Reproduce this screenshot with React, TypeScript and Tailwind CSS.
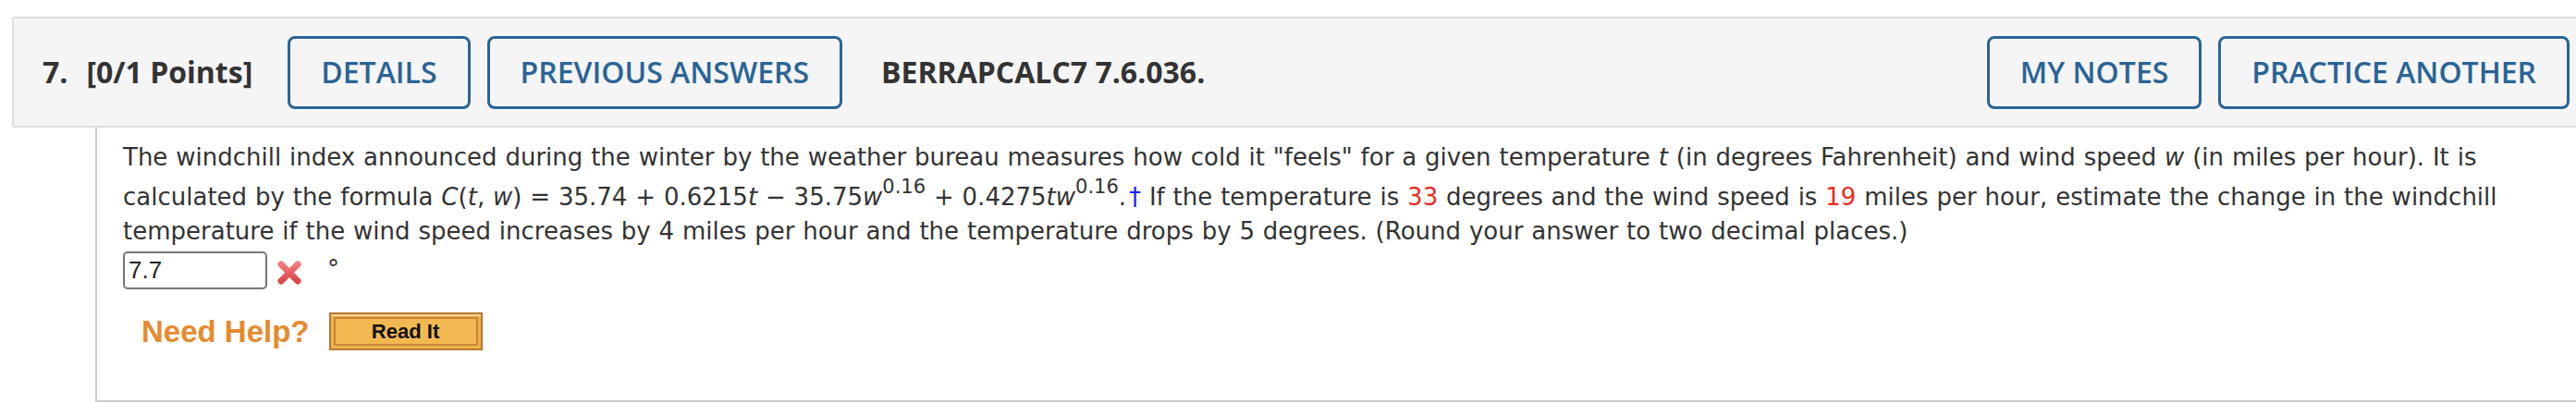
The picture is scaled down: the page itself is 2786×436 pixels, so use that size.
import React from "react";

const OPEN = { fontFamily: '"Open Sans", "Liberation Sans", sans-serif' };
const VERD = { fontFamily: '"DejaVu Sans", Verdana, sans-serif' };
const ARIAL = { fontFamily: '"Liberation Sans", Arial, sans-serif' };

function HeaderButton({ label }: { label: string }) {
  return (
    <button
      className="h-[79px] px-[33px] border-[3px] border-[#2a6496] rounded-[8px] bg-transparent text-[#2a6496] text-[32px] font-semibold leading-none whitespace-nowrap"
      style={OPEN}
    >
      {label}
    </button>
  );
}

function RedX() {
  return (
    <svg width="28" height="26" viewBox="0 0 28 26" className="ml-[10px] mt-[10px] shrink-0">
      <defs>
        <linearGradient id="xg" x1="0" y1="0" x2="0" y2="1">
          <stop offset="0" stopColor="#f07a7c" />
          <stop offset="1" stopColor="#d9474b" />
        </linearGradient>
      </defs>
      <path d="M5 4 L23 22 M23 4 L5 22" stroke="url(#xg)" strokeWidth="7" strokeLinecap="round" fill="none" />
    </svg>
  );
}

export default function App() {
  return (
    <div className="w-[2786px] h-[436px] overflow-hidden bg-white">
      <div className="pt-[18px] pl-[13px] w-[2812px]">
        {/* Header */}
        <div className="h-[120px] border-2 border-[#dedede] rounded-[3px] bg-[#f5f5f5] flex items-center pl-[31px] pr-[31px]">
          <div className="flex items-center text-[32px] font-bold text-[#333333] whitespace-nowrap" style={OPEN}>
            <span>7.</span>
            <span className="ml-[20px]">[0/1 Points]</span>
          </div>
          <div className="flex items-center gap-[18px] ml-[38px]">
            <HeaderButton label="DETAILS" />
            <HeaderButton label="PREVIOUS ANSWERS" />
          </div>
          <div className="ml-[42px] text-[32px] font-bold text-[#333333] whitespace-nowrap" style={OPEN}>
            BERRAPCALC7 7.6.036.
          </div>
          <div className="ml-auto flex items-center gap-[18px]">
            <HeaderButton label="MY NOTES" />
            <HeaderButton label="PRACTICE ANOTHER" />
          </div>
        </div>

        {/* Body */}
        <div className="ml-[90px] border-l-2 border-b-2 border-[#cccccc] h-[297px] pl-[28px] pt-[14px]">
          <div className="text-[26px] leading-[37px] text-[#333333] whitespace-nowrap [word-spacing:0.6px]" style={VERD}>
            <div>
              The windchill index announced during the winter by the weather bureau measures how cold it "feels" for a given temperature <i>t</i> (in degrees Fahrenheit) and wind speed <i>w</i> (in miles per hour). It is
            </div>
            <div className="mt-[6px]">
              calculated by the formula <i>C</i>(<i>t</i>, <i>w</i>) = 35.74 + 0.6215<i>t</i> − 35.75<i>w</i>
              <sup className="text-[21px] top-[-0.6em]">0.16</sup> + 0.4275<i>tw</i>
              <sup className="text-[21px] top-[-0.6em]">0.16</sup>.<span className="text-[#1a1aff] ml-[3px]">†</span> If the temperature is{" "}
              <span className="text-[#ea2c22]">33</span> degrees and the wind speed is{" "}
              <span className="text-[#ea2c22]">19</span> miles per hour, estimate the change in the windchill
            </div>
            <div>
              temperature if the wind speed increases by 4 miles per hour and the temperature drops by 5 degrees. (Round your answer to two decimal places.)
            </div>
          </div>

          <div className="flex items-start mt-[3px]">
            <input
              readOnly
              value="7.7"
              className="w-[156px] h-[41px] border-2 border-[#767676] rounded-[5px] pl-[4px] text-[26px] text-[#222222] bg-white outline-none"
              style={ARIAL}
            />
            <RedX />
            <span className="ml-[27px] mt-[4px] text-[26px] leading-[30px] text-[#333333]" style={VERD}>
              °
            </span>
          </div>

          <div className="flex items-center mt-[25px] pl-[20px]">
            <span className="text-[33px] font-bold text-[#e68a2e] leading-none" style={ARIAL}>
              Need Help?
            </span>
            <button className="ml-[21px] w-[166px] h-[41px] border-2 border-[#b5782f] bg-[#efb14a] p-[3px] shadow-[inset_0_2px_0_#f8d28a]">
              <div
                className="w-full h-full border-2 border-[#c98637] bg-[#f2b851] flex items-center justify-center text-[22px] font-bold text-[#111111] leading-none"
                style={ARIAL}
              >
                Read It
              </div>
            </button>
          </div>
        </div>
      </div>
    </div>
  );
}
